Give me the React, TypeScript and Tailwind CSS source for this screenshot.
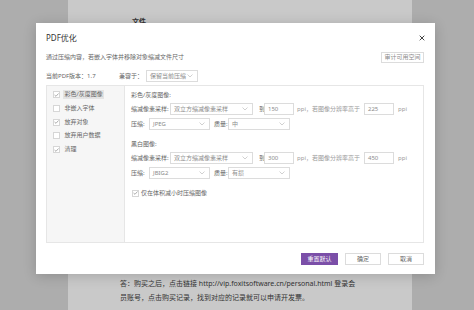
import React from "react";

const F = "font-['Noto_Sans','Noto_Sans_CJK_SC',sans-serif]";

function Chevron() {
  return (
    <svg width="6" height="4" viewBox="0 0 6 4" className="shrink-0">
      <polyline points="0.5,0.5 3,3 5.5,0.5" fill="none" stroke="#bdbdbd" strokeWidth="0.7" />
    </svg>
  );
}

function Check({ on }: { on: boolean }) {
  return (
    <div className="w-[7px] h-[7px] border border-[#d6d6d6] bg-white flex items-center justify-center shrink-0">
      {on && (
        <svg width="5" height="4" viewBox="0 0 5 4">
          <polyline points="0.5,2 2,3.3 4.5,0.5" fill="none" stroke="#8a8a8a" strokeWidth="0.7" />
        </svg>
      )}
    </div>
  );
}

function Select({ w, text }: { w: string; text: string }) {
  return (
    <div className={`${w} h-[12px] border border-[#dcdcdc] bg-white flex items-center justify-between pl-[3px] pr-[4px] text-[#8c8c8c] shrink-0`}>
      <span className="whitespace-nowrap">{text}</span>
      <Chevron />
    </div>
  );
}

function Input({ v }: { v: string }) {
  return (
    <div className="w-[30px] h-[12px] border border-[#dcdcdc] bg-white flex items-center pl-[3px] text-[#8c8c8c] shrink-0">
      {v}
    </div>
  );
}

function SampleRow({ a, b }: { a: string; b: string }) {
  return (
    <div className="mt-[3px] h-[12px] flex items-center">
      <span className="w-[39px] shrink-0 whitespace-nowrap">缩减像素采样:</span>
      <Select w="w-[83px]" text="双立方缩减像素采样" />
      <span className="ml-[6px] w-[5px] shrink-0">到</span>
      <Input v={a} />
      <span className="ml-[3px] w-[67px] shrink-0 whitespace-nowrap text-[#9a9a9a]">ppi，若图像分辨率高于</span>
      <Input v={b} />
      <span className="ml-[4px] text-[#9a9a9a]">ppi</span>
    </div>
  );
}

function CompRow({ c, q }: { c: string; q: string }) {
  return (
    <div className="mt-[3px] h-[12px] flex items-center">
      <span className="w-[18px] shrink-0">压缩:</span>
      <Select w="w-[61px]" text={c} />
      <span className="ml-[4px] w-[14px] shrink-0 whitespace-nowrap">质量:</span>
      <Select w="w-[62px]" text={q} />
    </div>
  );
}

export default function App() {
  const items: [string, boolean][] = [
    ["彩色/灰度图像", true],
    ["非嵌入字体", false],
    ["放弃对象", true],
    ["放弃用户数据", false],
    ["清理", true],
  ];
  return (
    <div className={`relative w-[474px] h-[310px] bg-[#adadad] overflow-hidden ${F}`}>
      <div className="ml-[68px] w-[344px] h-full bg-[#c9c9c9] flex flex-col">
        <div className="pl-[64px] pt-[17px] text-[7px] font-bold text-[#333] leading-[10px]">文件</div>
        <div className="mt-auto mb-[5px] pl-[52px] text-[7px] leading-[14px] text-[#333]">
          <div>答：购买之后，点击链接 http://vip.foxitsoftware.cn/personal.html 登录会</div>
          <div>员账号，点击购买记录，找到对应的记录就可以申请开发票。</div>
        </div>
      </div>

      <div className="absolute left-[36px] top-[23px] w-[399px] h-[251px] bg-white shadow-[0_2px_12px_rgba(0,0,0,0.18)] flex flex-col pl-[10px] pr-[11px] pt-[9px] text-[6px] text-[#666]">
        <div className="h-[12px] flex items-center justify-between">
          <span className="text-[8px] text-[#333]">PDF优化</span>
          <svg width="6" height="6" viewBox="0 0 6 6" className="mr-[-1px]">
            <path d="M0.7 0.7 L5.3 5.3 M5.3 0.7 L0.7 5.3" stroke="#444" strokeWidth="1" />
          </svg>
        </div>
        <div className="mt-[8px] h-[11px] flex items-center justify-between">
          <span>通过压缩内容，若嵌入字体并移除对象缩减文件尺寸</span>
          <div className="w-[43px] h-[11px] border border-[#dcdcdc] flex items-center justify-center text-[#8c8c8c]">审计可用空间</div>
        </div>
        <div className="mt-[7px] h-[12px] flex items-center">
          <span className="w-[73px] shrink-0">当前PDF版本：1.7</span>
          <span className="w-[27px] shrink-0">兼容于：</span>
          <Select w="w-[52px]" text="保留当前压缩" />
        </div>

        <div className="mt-[3px] h-[158px] flex border border-[#e6e6e6]">
          <div className="w-[78px] shrink-0 bg-[#f6f6f6] border-r border-[#e6e6e6] pt-[2px]">
            {items.map(([t, on], i) => (
              <div key={t} className="h-[13.7px] flex items-center pl-[6px]">
                <Check on={on} />
                <span className={`ml-[3px] px-[1.5px] leading-[9px] ${i === 0 ? "bg-[#e4e4e4]" : ""}`}>{t}</span>
              </div>
            ))}
          </div>
          <div className="flex-1 pl-[6px] pt-[4px]">
            <div className="h-[10px] flex items-center">彩色/灰度图像:</div>
            <SampleRow a="150" b="225" />
            <CompRow c="JPEG" q="中" />
            <div className="mt-[9px] h-[10px] flex items-center">黑白图像:</div>
            <SampleRow a="300" b="450" />
            <CompRow c="JBIG2" q="有损" />
            <div className="mt-[8px] h-[12px] flex items-center pl-[1px]">
              <Check on={true} />
              <span className="ml-[2px]">仅在体积减小时压缩图像</span>
            </div>
          </div>
        </div>

        <div className="mt-[10px] h-[12px] flex justify-end gap-[7px]">
          <div className="w-[37px] h-[12px] bg-[#7b4fa8] text-white flex items-center justify-center">重置默认</div>
          <div className="w-[36px] h-[12px] border border-[#dcdcdc] flex items-center justify-center">确定</div>
          <div className="w-[36px] h-[12px] border border-[#dcdcdc] flex items-center justify-center">取消</div>
        </div>
      </div>
    </div>
  );
}
